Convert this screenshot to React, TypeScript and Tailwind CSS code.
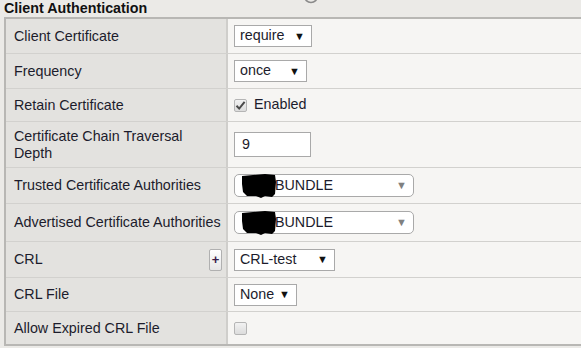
import React from "react";

type Row = {
  label: string;
  height: string;
  action?: React.ReactNode;
  value: React.ReactNode;
};

const Caret = ({ gray }: { gray?: boolean }) => (
  <span
    className={
      "text-[11px] leading-none " + (gray ? "text-[#808080]" : "text-[#111]")
    }
  >
    ▼
  </span>
);

const SimpleSelect = ({ text, width }: { text: string; width: string }) => (
  <div
    className={
      "flex h-[22px] items-center justify-between border border-[#a9a9a9] bg-white pl-[5px] pr-[6px] text-[14.3px] text-[#1c1c2c] " +
      width
    }
  >
    <span>{text}</span>
    <Caret />
  </div>
);

const Redacted = () => (
  <svg width="36" height="24" viewBox="0 0 36 24" className="-ml-[2px]">
    <path
      d="M1 2 L12 1 L24 0 L34 1 L35 8 L34 20 L31 23 L24 22 L20 24 L15 22 L6 22 L2 18 L1 10 Z"
      fill="#000"
    />
  </svg>
);

const BundleSelect = () => (
  <div className="flex h-[23px] w-[180px] items-center justify-between rounded-[5px] border border-[#a9a9a9] bg-white pl-[8px] pr-[6px] text-[14.3px] text-[#1c1c2c]">
    <span className="flex items-center">
      <Redacted />
      <span className="-ml-[2px]">BUNDLE</span>
    </span>
    <Caret gray />
  </div>
);

const Checkbox = ({ checked }: { checked?: boolean }) => (
  <span className="flex h-[13px] w-[13px] items-center justify-center rounded-[2px] border border-[#b5b5b5] bg-gradient-to-b from-[#f2f2f2] to-[#dcdcdc]">
    {checked && (
      <svg width="11" height="11" viewBox="0 0 11 11">
        <path
          d="M1.5 5.8 L4.2 8.6 L9.6 1.8"
          fill="none"
          stroke="#4a4a4a"
          strokeWidth="2"
        />
      </svg>
    )}
  </span>
);

const rows: Row[] = [
  {
    label: "Client Certificate",
    height: "h-[35px]",
    value: <SimpleSelect text="require" width="w-[78px]" />,
  },
  {
    label: "Frequency",
    height: "h-[35px]",
    value: <SimpleSelect text="once" width="w-[73px]" />,
  },
  {
    label: "Retain Certificate",
    height: "h-[33px]",
    value: (
      <div className="flex items-center gap-[7px]">
        <Checkbox checked />
        <span className="text-[14.3px] text-[#1c1c2c]">Enabled</span>
      </div>
    ),
  },
  {
    label: "Certificate Chain Traversal Depth",
    height: "h-[46px]",
    value: (
      <div className="flex h-[25px] w-[77px] items-center border border-[#a9a9a9] bg-white pl-[7px] text-[14.3px] text-[#1c1c2c]">
        9
      </div>
    ),
  },
  {
    label: "Trusted Certificate Authorities",
    height: "h-[36px]",
    value: <BundleSelect />,
  },
  {
    label: "Advertised Certificate Authorities",
    height: "h-[38px]",
    value: <BundleSelect />,
  },
  {
    label: "CRL",
    height: "h-[36px]",
    action: (
      <div className="flex h-[22px] w-[13px] items-center justify-center rounded-[2px] border border-[#b0b0b0] bg-gradient-to-b from-white to-[#e6e6e6] text-[13px] font-bold leading-none text-[#3a1c4a]">
        +
      </div>
    ),
    value: <SimpleSelect text="CRL-test" width="w-[101px]" />,
  },
  {
    label: "CRL File",
    height: "h-[34px]",
    value: <SimpleSelect text="None" width="w-[63px]" />,
  },
  {
    label: "Allow Expired CRL File",
    height: "h-[32px]",
    value: <Checkbox />,
  },
];

export default function App() {
  return (
    <div
      className="relative h-[348px] w-[581px] overflow-hidden bg-[#ebeae7]"
      style={{ fontFamily: '"Liberation Sans", Arial, sans-serif' }}
    >
      <svg
        width="16"
        height="16"
        viewBox="0 0 16 16"
        className="absolute left-[303px] top-[-12px]"
      >
        <circle cx="8" cy="8" r="6.5" fill="none" stroke="#8a8a8a" strokeWidth="1.6" />
      </svg>
      <div className="h-[17px] pl-[4px] text-[14.3px] font-bold leading-[16px] text-[#111]">
        Client Authentication
      </div>
      <div className="ml-[4px] border-t-2 border-b-2 border-l-2 border-[#b8b7b4]">
        {rows.map((row, i) => (
          <div
            key={row.label}
            className={
              "flex " +
              row.height +
              (i < rows.length - 1 ? " border-b border-[#d2d1ce]" : "")
            }
          >
            <div className="flex w-[222px] shrink-0 items-center justify-between border-r-2 border-[#cfcecb] bg-[#e3e2df] pl-[8px] pr-[4px] text-[14.3px] leading-[17px] text-[#1c1c2c]">
              <span className={i === 3 ? "w-[180px]" : ""}>{row.label}</span>
              {row.action}
            </div>
            <div className="flex flex-1 items-center bg-[#f6f5f3] pl-[6px]">
              {row.value}
            </div>
          </div>
        ))}
      </div>
    </div>
  );
}
